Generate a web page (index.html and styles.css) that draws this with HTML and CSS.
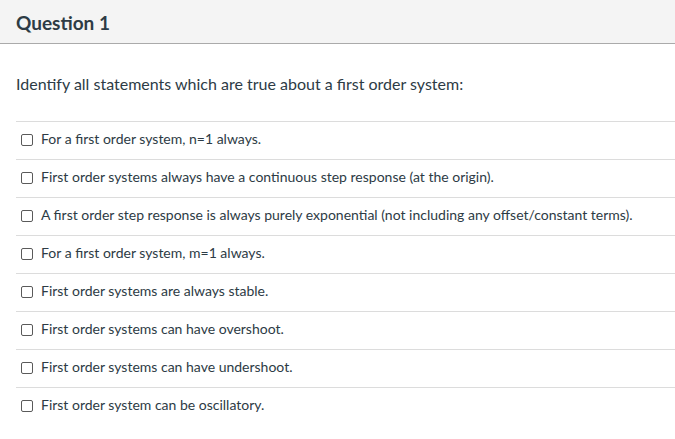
FILE: index.html
```html
<!DOCTYPE html>
<html>
<head>
<meta charset="utf-8">
<link rel="stylesheet" href="styles.css">
</head>
<body>
<div class="question">
  <div class="header"><h2 class="title">Question 1</h2></div>
  <div class="content">
    <p class="prompt">Identify all statements which are true about a first order system:</p>
    <div class="answers">
      <label class="answer"><span class="box"></span><span class="text">For a first order system, n=1 always.</span></label>
      <label class="answer"><span class="box"></span><span class="text">First order systems always have a continuous step response (at the origin).</span></label>
      <label class="answer"><span class="box"></span><span class="text">A first order step response is always purely exponential (not including any offset/constant terms).</span></label>
      <label class="answer"><span class="box"></span><span class="text">For a first order system, m=1 always.</span></label>
      <label class="answer"><span class="box"></span><span class="text">First order systems are always stable.</span></label>
      <label class="answer"><span class="box"></span><span class="text">First order systems can have overshoot.</span></label>
      <label class="answer"><span class="box"></span><span class="text">First order systems can have undershoot.</span></label>
      <label class="answer"><span class="box"></span><span class="text">First order system can be oscillatory.</span></label>
    </div>
  </div>
</div>
</body>
</html>
```
FILE: styles.css
```css
html, body {
  margin: 0;
  padding: 0;
  background: #fff;
}
body {
  font-family: Lato, "Open Sans", sans-serif;
  color: #2d3b45;
}
.header {
  background: #f4f4f4;
  border-bottom: 1px solid #aaaaaa;
  height: 43px;
  padding: 0 16px;
  display: flex;
  align-items: center;
}
.title {
  margin: 0;
  font-size: 19px;
  font-weight: 700;
  line-height: 1;
  padding-top: 1px;
}
.content {
  padding: 0 0 0 16px;
}
.prompt {
  margin: 0;
  padding-top: 28px;
  height: 49px;
  box-sizing: content-box;
  font-size: 16px;
  line-height: 24px;
}
.answers {
  display: flex;
  flex-direction: column;
}
.answer {
  display: flex;
  align-items: flex-start;
  gap: 8px;
  height: 38px;
  box-sizing: border-box;
  border-top: 1px solid #dcdcdc;
  padding: 8px 0 0 5px;
  font-size: 14px;
  line-height: 17px;
}
.box {
  width: 10px;
  height: 10px;
  margin-top: 4px;
  border: 1px solid #5a5a5a;
  border-radius: 2px;
  background: #fff;
  flex: none;
}
```
